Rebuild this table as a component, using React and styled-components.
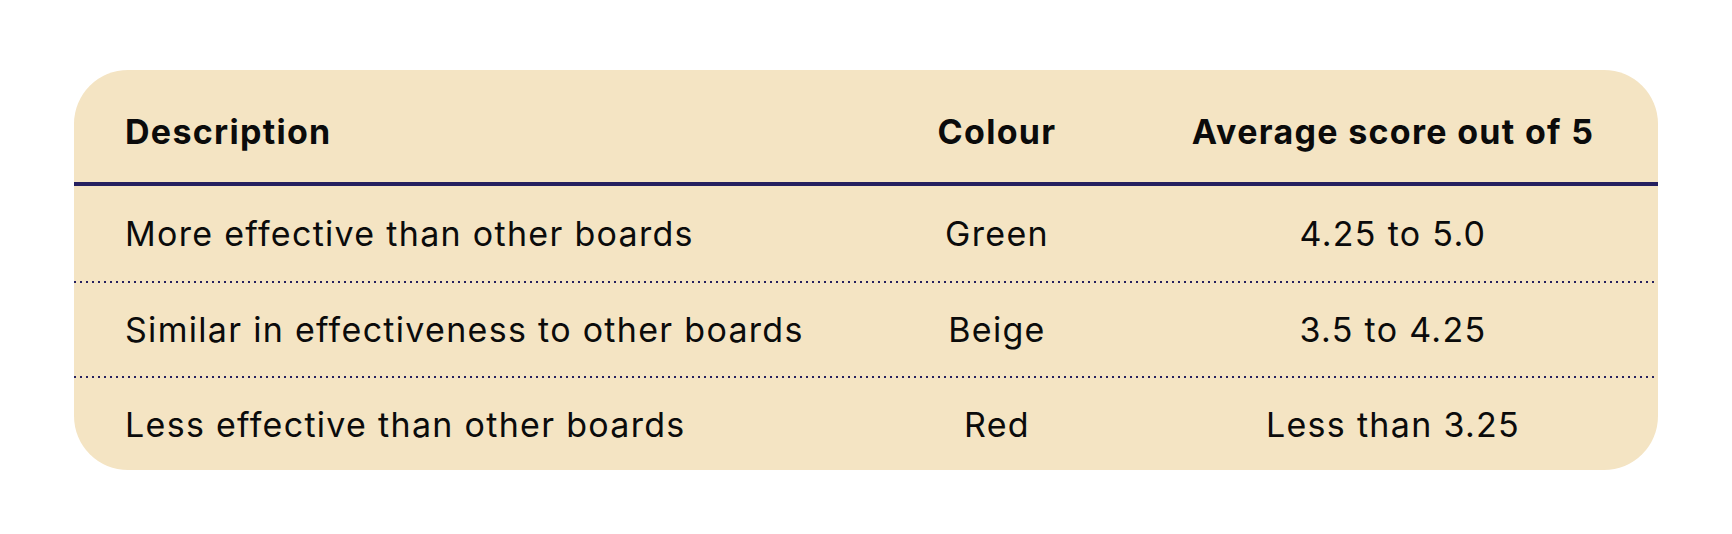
import React from "react";
import styled, { createGlobalStyle } from "styled-components";

const Global = createGlobalStyle`
  html, body { margin: 0; padding: 0; background: #ffffff; }
  body { font-family: Inter, "Noto Sans", sans-serif; color: #0b0b0b; }
`;

const Page = styled.div`
  padding: 70px 74px 64px 74px;
`;

const Card = styled.div`
  background: #f4e4c3;
  border-radius: 54px;
  height: 400px;
  display: flex;
  flex-direction: column;
  overflow: hidden;
`;

const Row = styled.div`
  display: grid;
  grid-template-columns: 792px 262px 530px;
  align-items: center;
  height: ${(p) => p.$h}px;
  padding-top: ${(p) => p.$pt || 0}px;
  box-sizing: border-box;
`;

const Cell = styled.div`
  font-size: 34px;
  font-weight: ${(p) => (p.$head ? 700 : 400)};
  line-height: 1.2;
  letter-spacing: 1.3px;
  text-align: ${(p) => p.$align || "center"};
  padding: ${(p) => (p.$align === "left" ? "0 0 0 51px" : "0 30px")};
  white-space: nowrap;
`;

const HeadRule = styled.div`
  height: 4px;
  background: #25205f;
`;

const DotRule = styled.div`
  height: 2px;
  background-image: repeating-linear-gradient(
    to right,
    #25205f 0 2px,
    transparent 2px 6px
  );
`;

const rows = [
  ["More effective than other boards", "Green", "4.25 to 5.0"],
  ["Similar in effectiveness to other boards", "Beige", "3.5 to 4.25"],
  ["Less effective than other boards", "Red", "Less than 3.25"],
];

export default function App() {
  return (
    <>
      <Global />
      <Page>
        <Card>
          <Row $h={112} $pt={13}>
            <Cell $head $align="left">Description</Cell>
            <Cell $head>Colour</Cell>
            <Cell $head>Average score out of 5</Cell>
          </Row>
          <HeadRule />
          <Row $h={95} $pt={2}>
            <Cell $align="left">{rows[0][0]}</Cell>
            <Cell>{rows[0][1]}</Cell>
            <Cell>{rows[0][2]}</Cell>
          </Row>
          <DotRule />
          <Row $h={93} $pt={2}>
            <Cell $align="left">{rows[1][0]}</Cell>
            <Cell>{rows[1][1]}</Cell>
            <Cell>{rows[1][2]}</Cell>
          </Row>
          <DotRule />
          <Row $h={92} $pt={2}>
            <Cell $align="left">{rows[2][0]}</Cell>
            <Cell>{rows[2][1]}</Cell>
            <Cell>{rows[2][2]}</Cell>
          </Row>
        </Card>
      </Page>
    </>
  );
}
